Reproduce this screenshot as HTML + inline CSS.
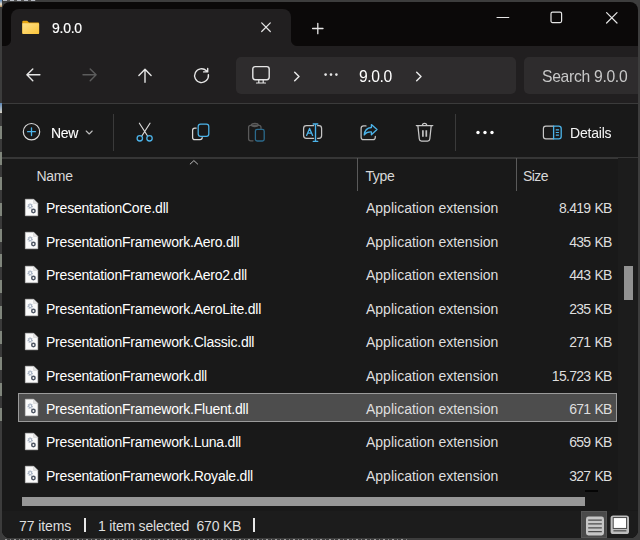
<!DOCTYPE html>
<html><head><meta charset="utf-8"><title>9.0.0</title>
<style>
*{box-sizing:border-box;margin:0;padding:0}
html,body{width:640px;height:540px;overflow:hidden}
body{background:#3d3d3d;font-family:"Liberation Sans",sans-serif;color:#fff;position:relative}
.a{position:absolute}
#win{position:absolute;left:2px;top:2px;width:636px;height:535.5px;border-radius:8px;background:#0b0909;overflow:hidden}
#tab{position:absolute;left:11px;top:9px;width:280px;height:37.4px;background:#211f20;border-radius:8px 8px 0 0}
#tabfl{position:absolute;left:291px;top:40.4px;width:6px;height:6px;background:radial-gradient(circle at 100% 0,#0b0909 5.5px,#211f20 6.5px)}
#tabfl2{position:absolute;left:5px;top:40.4px;width:6px;height:6px;background:radial-gradient(circle at 0 0,#0b0909 5.5px,#211f20 6.5px)}
#nav{position:absolute;left:2px;top:46.4px;width:636px;height:56.6px;background:#211f20}
#main{position:absolute;left:2px;top:103px;width:636px;height:434.5px;background:#191919;border-top:1px solid #3b3b3b;border-radius:0 0 8px 8px}
#addr{position:absolute;left:236px;top:57px;width:279.8px;height:37px;background:#2e2c2d;border-radius:5px}
#srch{position:absolute;left:524px;top:57px;width:114px;height:37px;background:#2e2c2d;border-radius:5px 0 0 5px}
.g{will-change:transform}
.t{position:absolute;white-space:nowrap;line-height:20px;height:20px}
.row{position:absolute;left:0;width:640px;height:20px}
.row .n{position:absolute;left:46px;top:0;font-size:14px;letter-spacing:-0.22px;line-height:20px;white-space:nowrap;color:#fff}
.row .ty{position:absolute;left:366px;top:0;font-size:14px;line-height:20px;white-space:nowrap;color:#dedede}
.row .sz{position:absolute;right:28.3px;word-spacing:0.8px;top:0;font-size:14px;letter-spacing:-0.7px;line-height:20px;white-space:nowrap;color:#dedede}
.row .fi{position:absolute;left:24px;top:-0.5px}
#selbox{position:absolute;left:18px;top:393px;width:599px;height:29px;background:#4d4d4d;border:1px solid #9b9b9b}
svg{overflow:visible}
.ic{position:absolute;fill:none;stroke:#e6e6e6;stroke-width:1.2;stroke-linecap:round;stroke-linejoin:round}
</style></head><body>

<div id="win"></div>
<div id="nav"></div>
<div id="tab"></div><div id="tabfl"></div><div id="tabfl2"></div>
<div id="main"></div>
<div id="addr"></div><div id="srch"></div>

<!-- tab contents -->
<svg class="a" style="left:22px;top:20px" width="18" height="15" viewBox="0 0 18 15">
 <defs><linearGradient id="fg" x1="0" y1="0" x2="1" y2="1"><stop offset="0" stop-color="#ffe18a"/><stop offset="1" stop-color="#fbc53a"/></linearGradient></defs>
 <path d="M0.3 1.8 Q0.3 0.8 1.3 0.8 H5.2 L7 2.6 H16.2 Q17.1 2.6 17.1 3.5 V13 Q17.1 14 16.1 14 H1.3 Q0.3 14 0.3 13 Z" fill="#e9a712"/>
 <path d="M0.3 3.2 H16.2 Q17.1 3.2 17.1 4.1 V13 Q17.1 14 16.1 14 H1.3 Q0.3 14 0.3 13 Z" fill="url(#fg)"/>
</svg>
<div class="t g" style="left:51.5px;top:18px;font-size:14px;letter-spacing:-0.25px;color:#fff;-webkit-text-stroke:0.15px #fff">9.0.0</div>
<svg class="ic" style="left:260px;top:21px;stroke-width:1.2" width="12" height="12" viewBox="0 0 12 12"><path d="M1.7 1.9 L10.3 10.5 M10.3 1.9 L1.7 10.5"/></svg>
<svg class="ic" style="left:311px;top:22px;stroke-width:1.3" width="14" height="14" viewBox="0 0 14 14"><path d="M1.6 6.5 H12 M6.8 1.3 V11.7"/></svg>
<!-- window buttons -->
<svg class="ic" style="left:496px;top:12px;stroke-width:1.1" width="14" height="12" viewBox="0 0 14 12"><path d="M1 5.5 H12.8"/></svg>
<svg class="ic" style="left:549px;top:10px;stroke-width:1.2" width="14" height="14" viewBox="0 0 14 14"><rect x="2" y="2.2" width="10.6" height="10.4" rx="1.5"/></svg>
<svg class="ic" style="left:605px;top:11px;stroke-width:1.2" width="14" height="14" viewBox="0 0 14 14"><path d="M1.6 1.6 L12 12 M12 1.6 L1.6 12"/></svg>

<!-- nav icons -->
<svg class="ic" style="left:25px;top:67px;stroke-width:1.4" width="17" height="16" viewBox="0 0 17 16"><path d="M14.9 7.8 H2 M7.8 1.9 L1.9 7.8 L7.8 13.8"/></svg>
<svg class="ic" style="left:81px;top:67px;stroke-width:1.4;stroke:#5c5c5c" width="17" height="16" viewBox="0 0 17 16"><path d="M2 7.8 H14.9 M9.2 1.9 L15.1 7.8 L9.2 13.8"/></svg>
<svg class="ic" style="left:137px;top:67px;stroke-width:1.4" width="16" height="17" viewBox="0 0 16 17"><path d="M8 15.2 V2.4 M1.9 8.5 L8 2.3 L14.1 8.5"/></svg>
<svg class="ic" style="left:193px;top:67px;stroke-width:1.4" width="17" height="17" viewBox="0 0 17 17"><path d="M15.38 7.71 A6.9 6.9 0 1 1 13.43 3.79 M14.7 1.4 V4.9 H10.6"/></svg>

<!-- address bar -->
<svg class="ic" style="left:251px;top:65px;stroke-width:1.4" width="20" height="20" viewBox="0 0 20 20"><rect x="1.8" y="1.6" width="16.4" height="13.1" rx="2.4"/><path d="M5.5 18 H14.5 M7.8 14.8 V17.8 M12.2 14.8 V17.8" stroke-width="1.2"/></svg>
<svg class="ic" style="left:292px;top:69px;stroke-width:1.5" width="10" height="14" viewBox="0 0 10 14"><path d="M2.7 3.2 L7 7.5 L2.7 11.8"/></svg>
<svg class="a" style="left:323px;top:72px" width="16" height="5" viewBox="0 0 16 5"><circle cx="2.6" cy="2.6" r="1.3" fill="#e6e6e6"/><circle cx="8" cy="2.6" r="1.3" fill="#e6e6e6"/><circle cx="13.4" cy="2.6" r="1.3" fill="#e6e6e6"/></svg>
<div class="t g" style="left:359px;top:66.7px;font-size:15.7px;letter-spacing:-0.4px;color:#fff">9.0.0</div>
<svg class="ic" style="left:414px;top:69px;stroke-width:1.5" width="10" height="14" viewBox="0 0 10 14"><path d="M2.7 3.2 L7 7.5 L2.7 11.8"/></svg>
<div class="t g" style="left:542px;top:66.7px;font-size:15.7px;letter-spacing:-0.3px;color:#c8c8c8">Search 9.0.0</div>

<!-- command bar -->
<svg class="ic" style="left:22px;top:122px;stroke-width:1.2;stroke:#d8d8d8" width="19" height="19" viewBox="0 0 19 19"><circle cx="9.5" cy="9.7" r="8.2"/><path d="M5.6 9.7 H13.4 M9.5 5.8 V13.6" stroke="#4cb4ea" stroke-width="1.3"/></svg>
<div class="t g" style="left:50.5px;top:122.5px;font-size:14px;letter-spacing:-0.3px;color:#fff;-webkit-text-stroke:0.1px #fff">New</div>
<svg class="ic" style="left:84px;top:128px;stroke-width:1.1;stroke:#bdbdbd" width="10" height="8" viewBox="0 0 10 8"><path d="M2.2 3 L5.2 6 L8.2 3"/></svg>
<div class="a" style="left:113px;top:114px;width:1px;height:37px;background:#3a3a3a"></div>
<div class="a" style="left:455px;top:114px;width:1px;height:37px;background:#3a3a3a"></div>
<!-- cut -->
<svg class="ic" style="left:135px;top:121px;stroke-width:1.2;stroke:#d8d8d8" width="20" height="22" viewBox="0 0 20 22"><path d="M4.4 2.2 L12.6 15 M15 2.2 L6.8 15"/><circle cx="4.8" cy="17.3" r="2.7" stroke="#4cb4ea" stroke-width="1.3"/><circle cx="14.5" cy="17.3" r="2.7" stroke="#4cb4ea" stroke-width="1.3"/></svg>
<!-- copy -->
<svg class="ic" style="left:190px;top:122px;stroke-width:1.25;stroke:#d8d8d8" width="21" height="20" viewBox="0 0 21 20"><path d="M6.2 6 H4.8 Q2.6 6 2.6 8.2 V15.4 Q2.6 17.6 4.8 17.6 H10 Q12.2 17.6 12.2 15.6"/><rect x="8.2" y="2.2" width="10.6" height="12.2" rx="2.4" stroke="#4cb4ea"/></svg>
<!-- paste -->
<svg class="ic" style="left:246px;top:121px;stroke-width:1.3;stroke:#5a5a5a" width="21" height="22" viewBox="0 0 21 22"><path d="M7 19.8 H4.6 Q2.6 19.8 2.6 17.8 V6.4 Q2.6 4.4 4.6 4.4 H13 Q15 4.4 15 6.4 V7.4"/><ellipse cx="8.8" cy="4" rx="3.4" ry="1.5"/><rect x="9.4" y="8.4" width="8.8" height="11.6" rx="1.8" stroke="#2b6a8c"/></svg>
<!-- rename -->
<svg class="ic" style="left:301px;top:121px;stroke-width:1.25;stroke:#d8d8d8" width="23" height="22" viewBox="0 0 23 22"><path d="M12.6 4.7 H5.4 Q2.6 4.7 2.6 7.5 V14.5 Q2.6 17.3 5.4 17.3 H12.6 M16.6 4.7 H18 Q20.6 4.7 20.6 7.5 V14.5 Q20.6 17.3 18 17.3 H16.6" stroke="#c4c4c4"/><path d="M14.5 3 V20.3 M12.2 3 H16.8 M12.2 20.3 H16.8" stroke="#4cb4ea" stroke-width="1.35"/><path d="M5.6 14.4 L8.6 7.4 L11.6 14.4 M6.6 12.2 H10.6" stroke="#4cb4ea" stroke-width="1.3"/></svg>
<!-- share -->
<svg class="ic" style="left:358px;top:121px;stroke-width:1.25;stroke:#d8d8d8" width="22" height="22" viewBox="0 0 22 22"><path d="M8 4.9 H5.6 Q3.1 4.9 3.1 7.4 V16.2 Q3.1 18.7 5.6 18.7 H14.8 Q17.3 18.7 17.3 16.2 V15.4" stroke="#c4c4c4"/><path d="M13.4 3.6 L19 8.6 L13.4 13.8 V11 Q8.6 10.6 6.2 14 Q6.8 7 13.4 6.5 Z" stroke="#4cb4ea" stroke-width="1.3"/></svg>
<!-- delete -->
<svg class="ic" style="left:414px;top:121px;stroke-width:1.25;stroke:#d8d8d8" width="22" height="22" viewBox="0 0 22 22"><path d="M2.3 4.5 H18.8 M8.4 4.2 Q8.4 2.3 10.55 2.3 Q12.7 2.3 12.7 4.2 M3.9 4.9 L5.3 18 Q5.5 20 7.5 20 H13.6 Q15.6 20 15.8 18 L17.2 4.9" stroke="#c8c8c8"/><path d="M8.9 9.2 V15.8 M12.3 9.2 V15.8" stroke="#c0c0c0" stroke-width="1.7" stroke-linecap="butt"/></svg>
<!-- more -->
<svg class="a" style="left:474px;top:129px" width="22" height="7" viewBox="0 0 22 7"><circle cx="4" cy="3.5" r="1.7" fill="#fff"/><circle cx="11" cy="3.5" r="1.7" fill="#fff"/><circle cx="18" cy="3.5" r="1.7" fill="#fff"/></svg>
<!-- details -->
<svg class="ic" style="left:541px;top:124px;stroke-width:1.2;stroke:#d8d8d8" width="22" height="17" viewBox="0 0 22 17"><path d="M12.6 2.2 H4.8 Q2.4 2.2 2.4 4.6 V12.4 Q2.4 14.8 4.8 14.8 H12.6" stroke="#c8c8c8"/><path d="M12.6 2.2 H17.8 Q20.2 2.2 20.2 4.6 V12.4 Q20.2 14.8 17.8 14.8 H12.6 Z" stroke="#4cb4ea" stroke-width="1.3"/><path d="M15.2 5.9 H17.6 M15.2 8.5 H17.6 M15.2 11.1 H17.6" stroke="#4cb4ea" stroke-width="1.1"/></svg>
<div class="t g" style="left:570.2px;top:122.5px;font-size:14px;letter-spacing:-0.2px;color:#f4f4f4">Details</div>

<!-- header -->
<div class="a" style="left:2px;top:156.7px;width:636px;height:2.1px;background:#363636"></div>
<svg class="ic" style="left:187px;top:158px;stroke-width:1;stroke:#bdbdbd" width="14" height="8" viewBox="0 0 14 8"><path d="M3.2 6 L6.9 2.6 L10.6 6"/></svg>
<div class="a" style="left:357px;top:158px;width:1px;height:33px;background:#5a5a5a"></div>
<div class="a" style="left:516px;top:158px;width:1px;height:33px;background:#5a5a5a"></div>
<div class="a" style="left:618px;top:158px;width:20px;height:352px;background:#1c1c1c"></div>
<div class="t" style="left:36.5px;top:165.5px;font-size:14px;letter-spacing:-0.3px;color:#d8d8d8">Name</div>
<div class="t" style="left:365.4px;top:165.5px;font-size:14px;letter-spacing:-0.3px;color:#d8d8d8">Type</div>
<div class="t" style="left:523px;top:165.5px;font-size:14px;letter-spacing:-0.6px;color:#d8d8d8">Size</div>

<!-- rows -->
<div id="selbox"></div>
<div class="row" style="top:198.3px"><svg class="fi" width="15" height="19" viewBox="0 0 15 19"><path d="M1.3 1.2 H9.6 L13.8 5.4 V17.8 H1.3 Z" fill="#fafafa" stroke="#d0d0d0" stroke-width="0.5"/> <path d="M9.6 1.2 V5.4 H13.8 Z" fill="#e6e6e6" stroke="#c4c4c4" stroke-width="0.5"/> <circle cx="6.2" cy="8.1" r="2" fill="none" stroke="#aab5c5" stroke-width="1.5" stroke-dasharray="1 0.57"/> <circle cx="6.2" cy="8.1" r="1.5" fill="none" stroke="#aab5c5" stroke-width="1"/> <circle cx="9.4" cy="13" r="1.7" fill="none" stroke="#4d5563" stroke-width="1.5"/></svg><span class="n">PresentationCore.dll</span><span class="ty">Application extension</span><span class="sz">8.419 KB</span></div>
<div class="row" style="top:231.7px"><svg class="fi" width="15" height="19" viewBox="0 0 15 19"><path d="M1.3 1.2 H9.6 L13.8 5.4 V17.8 H1.3 Z" fill="#fafafa" stroke="#d0d0d0" stroke-width="0.5"/> <path d="M9.6 1.2 V5.4 H13.8 Z" fill="#e6e6e6" stroke="#c4c4c4" stroke-width="0.5"/> <circle cx="6.2" cy="8.1" r="2" fill="none" stroke="#aab5c5" stroke-width="1.5" stroke-dasharray="1 0.57"/> <circle cx="6.2" cy="8.1" r="1.5" fill="none" stroke="#aab5c5" stroke-width="1"/> <circle cx="9.4" cy="13" r="1.7" fill="none" stroke="#4d5563" stroke-width="1.5"/></svg><span class="n">PresentationFramework.Aero.dll</span><span class="ty">Application extension</span><span class="sz">435 KB</span></div>
<div class="row" style="top:265.2px"><svg class="fi" width="15" height="19" viewBox="0 0 15 19"><path d="M1.3 1.2 H9.6 L13.8 5.4 V17.8 H1.3 Z" fill="#fafafa" stroke="#d0d0d0" stroke-width="0.5"/> <path d="M9.6 1.2 V5.4 H13.8 Z" fill="#e6e6e6" stroke="#c4c4c4" stroke-width="0.5"/> <circle cx="6.2" cy="8.1" r="2" fill="none" stroke="#aab5c5" stroke-width="1.5" stroke-dasharray="1 0.57"/> <circle cx="6.2" cy="8.1" r="1.5" fill="none" stroke="#aab5c5" stroke-width="1"/> <circle cx="9.4" cy="13" r="1.7" fill="none" stroke="#4d5563" stroke-width="1.5"/></svg><span class="n">PresentationFramework.Aero2.dll</span><span class="ty">Application extension</span><span class="sz">443 KB</span></div>
<div class="row" style="top:298.6px"><svg class="fi" width="15" height="19" viewBox="0 0 15 19"><path d="M1.3 1.2 H9.6 L13.8 5.4 V17.8 H1.3 Z" fill="#fafafa" stroke="#d0d0d0" stroke-width="0.5"/> <path d="M9.6 1.2 V5.4 H13.8 Z" fill="#e6e6e6" stroke="#c4c4c4" stroke-width="0.5"/> <circle cx="6.2" cy="8.1" r="2" fill="none" stroke="#aab5c5" stroke-width="1.5" stroke-dasharray="1 0.57"/> <circle cx="6.2" cy="8.1" r="1.5" fill="none" stroke="#aab5c5" stroke-width="1"/> <circle cx="9.4" cy="13" r="1.7" fill="none" stroke="#4d5563" stroke-width="1.5"/></svg><span class="n">PresentationFramework.AeroLite.dll</span><span class="ty">Application extension</span><span class="sz">235 KB</span></div>
<div class="row" style="top:332.0px"><svg class="fi" width="15" height="19" viewBox="0 0 15 19"><path d="M1.3 1.2 H9.6 L13.8 5.4 V17.8 H1.3 Z" fill="#fafafa" stroke="#d0d0d0" stroke-width="0.5"/> <path d="M9.6 1.2 V5.4 H13.8 Z" fill="#e6e6e6" stroke="#c4c4c4" stroke-width="0.5"/> <circle cx="6.2" cy="8.1" r="2" fill="none" stroke="#aab5c5" stroke-width="1.5" stroke-dasharray="1 0.57"/> <circle cx="6.2" cy="8.1" r="1.5" fill="none" stroke="#aab5c5" stroke-width="1"/> <circle cx="9.4" cy="13" r="1.7" fill="none" stroke="#4d5563" stroke-width="1.5"/></svg><span class="n">PresentationFramework.Classic.dll</span><span class="ty">Application extension</span><span class="sz">271 KB</span></div>
<div class="row" style="top:365.5px"><svg class="fi" width="15" height="19" viewBox="0 0 15 19"><path d="M1.3 1.2 H9.6 L13.8 5.4 V17.8 H1.3 Z" fill="#fafafa" stroke="#d0d0d0" stroke-width="0.5"/> <path d="M9.6 1.2 V5.4 H13.8 Z" fill="#e6e6e6" stroke="#c4c4c4" stroke-width="0.5"/> <circle cx="6.2" cy="8.1" r="2" fill="none" stroke="#aab5c5" stroke-width="1.5" stroke-dasharray="1 0.57"/> <circle cx="6.2" cy="8.1" r="1.5" fill="none" stroke="#aab5c5" stroke-width="1"/> <circle cx="9.4" cy="13" r="1.7" fill="none" stroke="#4d5563" stroke-width="1.5"/></svg><span class="n">PresentationFramework.dll</span><span class="ty">Application extension</span><span class="sz">15.723 KB</span></div>
<div class="row sel" style="top:398.9px"><svg class="fi" width="15" height="19" viewBox="0 0 15 19"><path d="M1.3 1.2 H9.6 L13.8 5.4 V17.8 H1.3 Z" fill="#fafafa" stroke="#d0d0d0" stroke-width="0.5"/> <path d="M9.6 1.2 V5.4 H13.8 Z" fill="#e6e6e6" stroke="#c4c4c4" stroke-width="0.5"/> <circle cx="6.2" cy="8.1" r="2" fill="none" stroke="#aab5c5" stroke-width="1.5" stroke-dasharray="1 0.57"/> <circle cx="6.2" cy="8.1" r="1.5" fill="none" stroke="#aab5c5" stroke-width="1"/> <circle cx="9.4" cy="13" r="1.7" fill="none" stroke="#4d5563" stroke-width="1.5"/></svg><span class="n">PresentationFramework.Fluent.dll</span><span class="ty">Application extension</span><span class="sz">671 KB</span></div>
<div class="row" style="top:432.3px"><svg class="fi" width="15" height="19" viewBox="0 0 15 19"><path d="M1.3 1.2 H9.6 L13.8 5.4 V17.8 H1.3 Z" fill="#fafafa" stroke="#d0d0d0" stroke-width="0.5"/> <path d="M9.6 1.2 V5.4 H13.8 Z" fill="#e6e6e6" stroke="#c4c4c4" stroke-width="0.5"/> <circle cx="6.2" cy="8.1" r="2" fill="none" stroke="#aab5c5" stroke-width="1.5" stroke-dasharray="1 0.57"/> <circle cx="6.2" cy="8.1" r="1.5" fill="none" stroke="#aab5c5" stroke-width="1"/> <circle cx="9.4" cy="13" r="1.7" fill="none" stroke="#4d5563" stroke-width="1.5"/></svg><span class="n">PresentationFramework.Luna.dll</span><span class="ty">Application extension</span><span class="sz">659 KB</span></div>
<div class="row" style="top:465.7px"><svg class="fi" width="15" height="19" viewBox="0 0 15 19"><path d="M1.3 1.2 H9.6 L13.8 5.4 V17.8 H1.3 Z" fill="#fafafa" stroke="#d0d0d0" stroke-width="0.5"/> <path d="M9.6 1.2 V5.4 H13.8 Z" fill="#e6e6e6" stroke="#c4c4c4" stroke-width="0.5"/> <circle cx="6.2" cy="8.1" r="2" fill="none" stroke="#aab5c5" stroke-width="1.5" stroke-dasharray="1 0.57"/> <circle cx="6.2" cy="8.1" r="1.5" fill="none" stroke="#aab5c5" stroke-width="1"/> <circle cx="9.4" cy="13" r="1.7" fill="none" stroke="#4d5563" stroke-width="1.5"/></svg><span class="n">PresentationFramework.Royale.dll</span><span class="ty">Application extension</span><span class="sz">327 KB</span></div>

<!-- scrollbars -->
<div class="a" style="left:624.2px;top:266px;width:8.8px;height:33.6px;background:#929292"></div>
<div class="a" style="left:22px;top:497px;width:563px;height:9px;background:#979797"></div>
<div class="a" style="left:585px;top:490.4px;width:13px;height:1.3px;background:#050505"></div>

<!-- status -->
<div class="a" style="left:2px;top:510.5px;width:636px;height:27px;background:#1c1c1c;border-radius:0 0 8px 8px"></div>
<div class="t" style="left:19px;top:515.5px;font-size:14px;letter-spacing:-0.1px;color:#dedede">77 items</div>
<div class="a" style="left:84px;top:517.5px;width:2px;height:14px;background:#e8e8e8"></div>
<div class="t" style="left:98px;top:515.5px;font-size:14px;letter-spacing:-0.2px;color:#dedede">1 item selected&nbsp; 670 KB</div>
<div class="a" style="left:253px;top:517.5px;width:2px;height:14px;background:#e8e8e8"></div>
<div class="a" style="left:581px;top:511px;width:26px;height:26.5px;background:#4a4a4a;border:1px solid #565656"></div>
<svg class="a" style="left:585px;top:516px" width="20" height="20" viewBox="0 0 20 20"><rect x="1" y="0.5" width="18" height="19" rx="2.4" fill="#c6c6c6"/><path d="M3.2 4.1 H16.8 M3.2 7.9 H16.8 M3.2 11.8 H16.8 M3.2 15.6 H16.8" stroke="#4c4c4c" stroke-width="1.2"/></svg>
<svg class="a" style="left:610px;top:515px" width="20" height="20" viewBox="0 0 20 20"><rect x="0.6" y="0.4" width="18.4" height="18.6" rx="2.6" fill="#bdbdbd"/><rect x="3.2" y="2.6" width="13.4" height="10.8" fill="#fff" stroke="#3a3a3a" stroke-width="0.9"/><path d="M3.4 15.8 H16.4" stroke="#5a5a5a" stroke-width="1.4"/></svg>
<!-- desktop edges -->
<div class="a" style="left:0;top:0;width:2px;height:540px;background:#3c3c3c"></div>
<div class="a" style="left:0;top:103px;width:1.8px;height:10px;background:linear-gradient(180deg,#5a86b8,#d8d2c4)"></div>
<div class="a" style="left:0;top:0;width:2px;height:7px;background:linear-gradient(180deg,#5a86b8,#e4dccc 60%,#b08a58)"></div>
<div class="a" style="left:0;top:125.5px;width:1.8px;height:297px;background:repeating-linear-gradient(180deg,#80867c 0,#80867c 13px,#3a3a3a 13px,#3a3a3a 25.67px)"></div>
<div class="a" style="left:5px;top:538.8px;width:403px;height:1.2px;background:repeating-linear-gradient(90deg,#9a9a9a 0,#9a9a9a 2px,#3d3d3d 2px,#3d3d3d 5px,#8a8a8a 5px,#8a8a8a 6px,#3d3d3d 6px,#3d3d3d 9px)"></div>
<div class="a" style="left:3px;top:0;width:33px;height:1.2px;background:repeating-linear-gradient(90deg,#b8bcc4 0,#b8bcc4 4px,#555 4px,#555 7px)"></div>
</body></html>
